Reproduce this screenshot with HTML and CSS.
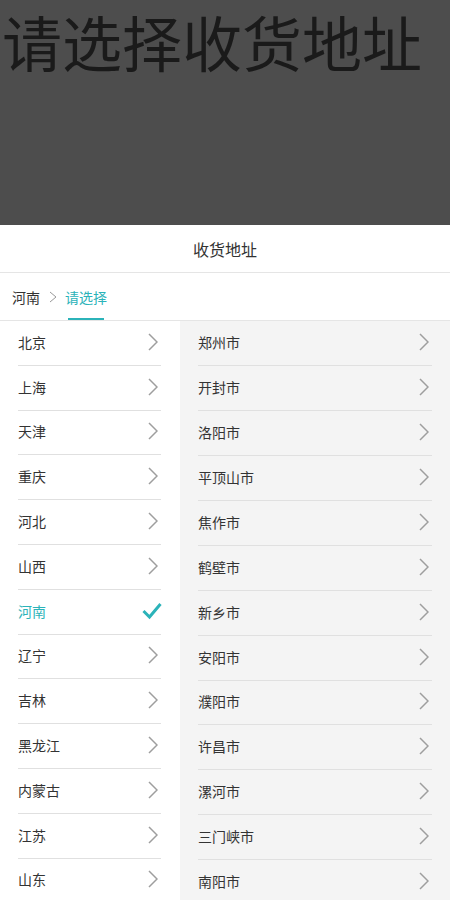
FILE: index.html
```html
<!DOCTYPE html>
<html lang="zh-CN">
<head>
    <meta charset="UTF-8">
    <meta name="viewport" content="width=device-width, initial-scale=1.0">
    <title>收货地址</title>
    <link rel="stylesheet" href="styles.css">
</head>
<body>

    <svg class="defs" width="0" height="0">
        <symbol id="chev" viewBox="0 0 10 18">
            <polyline points="1,1 9,9 1,17" fill="none" stroke="#9e9e9e" stroke-width="1.5"/>
        </symbol>
        <symbol id="check" viewBox="0 0 20 18">
            <polyline points="1.5,9 7.5,15 18.5,2" fill="none" stroke="#2bb3b9" stroke-width="3"/>
        </symbol>
    </svg>

    <div class="mask">
        <h1>请选择收货地址</h1>
    </div>

    <div class="sheet">
        <div class="sheet-title">收货地址</div>

        <div class="tabs">
            <span class="tab">河南</span>
            <svg class="tab-sep" viewBox="0 0 8 12"><polyline points="1,1 7,6 1,11" fill="none" stroke="#999" stroke-width="1"/></svg>
            <span class="tab active">请选择</span>
        </div>

        <div class="columns">
            <!-- 省份 -->
            <ul class="list province">
                <li><span>北京</span><svg class="chev"><use href="#chev"/></svg></li>
                <li><span>上海</span><svg class="chev"><use href="#chev"/></svg></li>
                <li><span>天津</span><svg class="chev"><use href="#chev"/></svg></li>
                <li><span>重庆</span><svg class="chev"><use href="#chev"/></svg></li>
                <li><span>河北</span><svg class="chev"><use href="#chev"/></svg></li>
                <li><span>山西</span><svg class="chev"><use href="#chev"/></svg></li>
                <li class="selected"><span>河南</span><svg class="check"><use href="#check"/></svg></li>
                <li><span>辽宁</span><svg class="chev"><use href="#chev"/></svg></li>
                <li><span>吉林</span><svg class="chev"><use href="#chev"/></svg></li>
                <li><span>黑龙江</span><svg class="chev"><use href="#chev"/></svg></li>
                <li><span>内蒙古</span><svg class="chev"><use href="#chev"/></svg></li>
                <li><span>江苏</span><svg class="chev"><use href="#chev"/></svg></li>
                <li><span>山东</span><svg class="chev"><use href="#chev"/></svg></li>
            </ul>

            <!-- 城市 -->
            <ul class="list city">
                <li><span>郑州市</span><svg class="chev"><use href="#chev"/></svg></li>
                <li><span>开封市</span><svg class="chev"><use href="#chev"/></svg></li>
                <li><span>洛阳市</span><svg class="chev"><use href="#chev"/></svg></li>
                <li><span>平顶山市</span><svg class="chev"><use href="#chev"/></svg></li>
                <li><span>焦作市</span><svg class="chev"><use href="#chev"/></svg></li>
                <li><span>鹤壁市</span><svg class="chev"><use href="#chev"/></svg></li>
                <li><span>新乡市</span><svg class="chev"><use href="#chev"/></svg></li>
                <li><span>安阳市</span><svg class="chev"><use href="#chev"/></svg></li>
                <li><span>濮阳市</span><svg class="chev"><use href="#chev"/></svg></li>
                <li><span>许昌市</span><svg class="chev"><use href="#chev"/></svg></li>
                <li><span>漯河市</span><svg class="chev"><use href="#chev"/></svg></li>
                <li><span>三门峡市</span><svg class="chev"><use href="#chev"/></svg></li>
                <li><span>南阳市</span><svg class="chev"><use href="#chev"/></svg></li>
            </ul>
        </div>
    </div>

</body>
</html>
```

FILE: styles.css
```css
html, body {
    margin: 0;
    padding: 0;
}
body {
    width: 450px;
    height: 900px;
    overflow: hidden;
    font-family: "Noto Sans CJK SC", "Noto Sans", sans-serif;
    background-color: #fff;
    color: #333;
}
.defs {
    position: absolute;
    width: 0;
    height: 0;
}

/* 遮罩 */
.mask {
    height: 225px;
    background-color: #4d4d4d;
}
.mask h1 {
    margin: 0;
    padding-left: 2px;
    font-size: 60px;
    font-weight: normal;
    line-height: 81px;
    color: #1a1a1a;
    white-space: nowrap;
}

/* 面板 */
.sheet-title {
    height: 47px;
    line-height: 49px;
    text-align: center;
    font-size: 16px;
    color: #333;
    border-bottom: 1px solid #e5e5e5;
}
.tabs {
    height: 47px;
    display: flex;
    align-items: center;
    padding-left: 12px;
    border-bottom: 1px solid #e5e5e5;
    font-size: 14px;
}
.tab {
    height: 47px;
    line-height: 48px;
}
.tab.active {
    color: #2bb3b9;
    /* 下划线比文字略短 */
    background: linear-gradient(#2bb3b9, #2bb3b9) no-repeat center bottom / 36px 2px;
}
.tab-sep {
    width: 8px;
    height: 12px;
    margin: 0 8px 0 9px;
}

/* 列表 */
.columns {
    display: flex;
}
.list {
    list-style: none;
    margin: 0;
    padding: 0;
}
.province {
    width: 180px;
    background-color: #fff;
}
.city {
    flex: 1;
    height: 600px;
    background-color: #f4f4f4;
}
.list li {
    height: 42px;
    padding-bottom: 2px;
    margin-left: 18px;
    display: flex;
    align-items: center;
    justify-content: space-between;
    border-bottom: 1px solid #e0e0e0;
    font-size: 14px;
}
.province li {
    width: 143px;
    height: 41.8px;
}
.city li {
    height: 41.95px;
    margin-right: 18px;
}
.chev {
    width: 10px;
    height: 18px;
    margin-right: 3px;
}
.check {
    width: 20px;
    height: 18px;
    margin-right: -1px;
}
.selected {
    color: #2bb3b9;
}
```
